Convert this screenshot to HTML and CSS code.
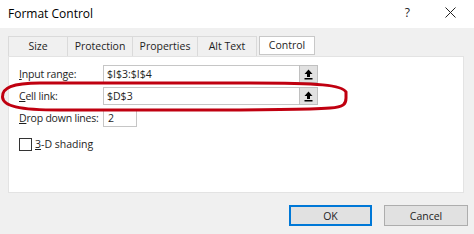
FILE: index.html
```html
<!DOCTYPE html>
<html lang="en">
<head>
    <meta charset="UTF-8">
    <title>Format Control</title>
    <link rel="stylesheet" href="styles.css">
</head>
<body>
    <div class="dialog">
        <div class="titlebar">
            <span class="title">Format Control</span>
            <span class="help">?</span>
            <svg class="close" width="11" height="11" viewBox="0 0 11 11">
                <path d="M0.5 0.5 L10.5 10.5 M10.5 0.5 L0.5 10.5" stroke="#222" stroke-width="1" fill="none"/>
            </svg>
        </div>

        <div class="body">
            <div class="tabs">
                <div class="tab tab-size">Size</div>
                <div class="tab tab-protection">Protection</div>
                <div class="tab tab-properties">Properties</div>
                <div class="tab tab-alt">Alt Text</div>
                <div class="tab tab-active">Control</div>
            </div>

            <div class="panel">
                <div class="row">
                    <label class="field-label"><u>I</u>nput range:</label>
                    <div class="refedit">
                        <span class="value">$I$3:$I$4</span>
                        <span class="collapse">
                            <svg width="9" height="11" viewBox="0 0 9 11">
                                <path d="M4.5 0.5 L8.5 5 L6 5 L6 8 L3 8 L3 5 L0.5 5 Z" fill="#000"/>
                                <rect x="0.5" y="9" width="8" height="1.5" fill="#000"/>
                            </svg>
                        </span>
                    </div>
                </div>
                <div class="row">
                    <label class="field-label"><u>C</u>ell link:</label>
                    <div class="refedit">
                        <span class="value">$D$3</span>
                        <span class="collapse">
                            <svg width="9" height="11" viewBox="0 0 9 11">
                                <path d="M4.5 0.5 L8.5 5 L6 5 L6 8 L3 8 L3 5 L0.5 5 Z" fill="#000"/>
                                <rect x="0.5" y="9" width="8" height="1.5" fill="#000"/>
                            </svg>
                        </span>
                    </div>
                </div>
                <div class="row">
                    <label class="field-label"><u>D</u>rop down lines:</label>
                    <div class="small-input">2</div>
                </div>
                <div class="check">
                    <span class="checkbox"></span>
                    <span><u>3</u>-D shading</span>
                </div>
            </div>

            <div class="buttons">
                <button class="btn btn-ok">OK</button>
                <button class="btn">Cancel</button>
            </div>
        </div>

        <!-- red highlight drawn over the cell link row -->
        <svg class="highlight" width="474" height="234" viewBox="0 0 474 234">
            <path d="M346 92 C342 85 320 83 250 83 L40 83 C12 83 2 88 2.5 97 C3 106 18 110 60 110 L190 110 C250 110 300 110 330 108 C344 107 346 104 346 98 Z"
                  fill="none" stroke="#c00010" stroke-width="3"/>
        </svg>
    </div>
</body>
</html>
```

FILE: styles.css
```css
* {
    margin: 0;
    padding: 0;
    box-sizing: border-box;
}

body {
    width: 474px;
    height: 234px;
    overflow: hidden;
    font-family: 'Segoe UI', 'Open Sans', 'Noto Sans', sans-serif;
    font-size: 10.5px;
    color: #1e1e1e;
}

.dialog {
    position: relative;
    width: 474px;
    height: 234px;
    background: #f0f0f0;
}

.titlebar {
    height: 28px;
    background: #fff;
    display: flex;
    align-items: center;
    padding-left: 8px;
}

.title {
    font-size: 12px;
    color: #000;
    flex: 1;
    margin-top: -2px;
}

.help {
    font-size: 12px;
    color: #222;
    margin-right: 35px;
    margin-top: -4px;
}

.close {
    margin-right: 18px;
    margin-top: -4px;
}

.body {
    padding: 8px 8px 0 8px;
}

.tabs {
    display: flex;
    align-items: flex-end;
    height: 20px;
}

.tab {
    height: 20px;
    border: 1px solid #dadada;
    border-bottom: none;
    border-left: none;
    background: #f0f0f0;
    text-align: center;
    line-height: 19px;
    font-size: 10.5px;
    color: #1e1e1e;
}

.tab-size {
    width: 60px;
    border-left: 1px solid #dadada;
}

.tab-protection {
    width: 65px;
}

.tab-properties {
    width: 65px;
}

.tab-alt {
    width: 59px;
}

.tab-active {
    width: 56px;
    height: 19px;
    margin-left: 2px;
    margin-bottom: 1px;
    background: #fff;
    border: 1px solid #c8c8c8;
    line-height: 17px;
}

.panel {
    width: 456px;
    height: 137px;
    background: #fff;
    border: 1px solid #e3e3e3;
    padding: 8px 0 0 10px;
    display: flex;
    flex-direction: column;
    gap: 4px;
}

.row {
    display: flex;
    align-items: center;
    height: 18px;
}

.field-label {
    width: 84px;
    white-space: nowrap;
    letter-spacing: -0.2px;
}

.refedit {
    width: 215px;
    height: 18px;
    border: 1px solid #c6c6c6;
    display: flex;
    align-items: center;
    background: #fff;
}

.value {
    flex: 1;
    padding-left: 3px;
}

.collapse {
    width: 19px;
    height: 18px;
    margin-right: -1px;
    background: #e1e1e1;
    border: 1px solid #c0c0c0;
    display: flex;
    align-items: center;
    justify-content: center;
}

.small-input {
    width: 34px;
    height: 18px;
    border: 1px solid #c6c6c6;
    padding-left: 4px;
    line-height: 16px;
}

.check {
    display: flex;
    align-items: center;
    gap: 3px;
    margin-top: 6px;
}

.checkbox {
    width: 13px;
    height: 13px;
    border: 1px solid #333;
    background: #fff;
}

.buttons {
    display: flex;
    justify-content: flex-end;
    gap: 12px;
    margin-top: 12px;
    margin-right: -2px;
}

.btn {
    width: 84px;
    height: 21px;
    background: #e1e1e1;
    border: 1px solid #adadad;
    font-family: inherit;
    font-size: 10.5px;
    color: #1e1e1e;
}

.btn-ok {
    width: 83px;
    border: 2px solid #0078d7;
}

.highlight {
    position: absolute;
    left: 0;
    top: 0;
    pointer-events: none;
}
```
